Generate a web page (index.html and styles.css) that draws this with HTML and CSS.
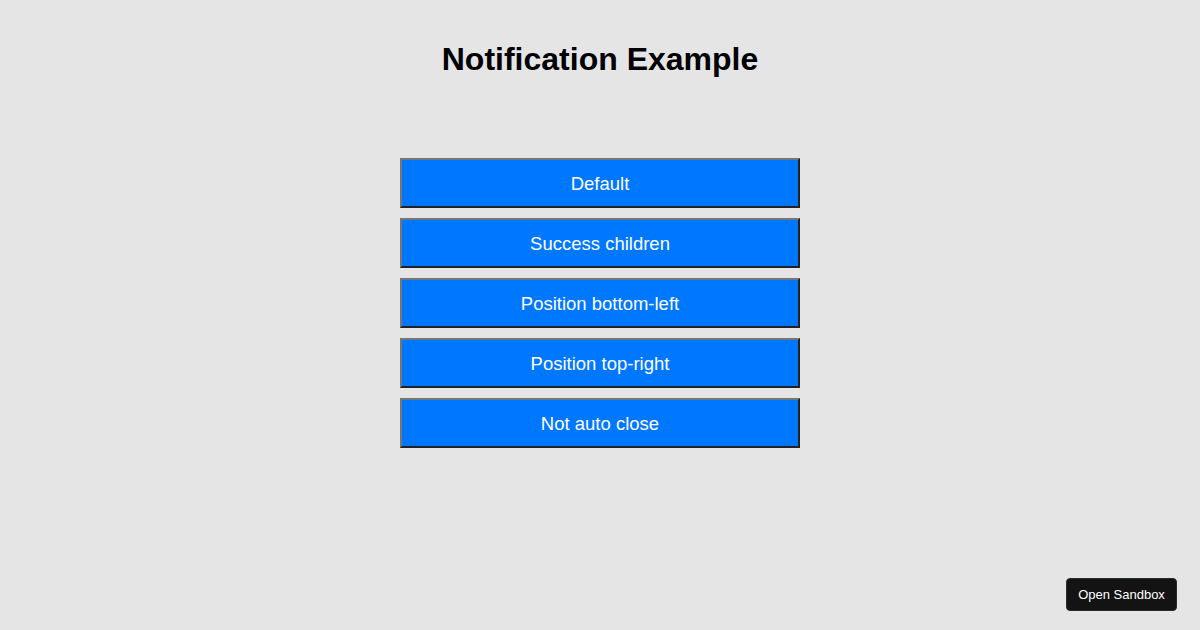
FILE: index.html
```html
<!DOCTYPE html>
<html>
<head>
<meta charset="utf-8">
<link rel="stylesheet" href="styles.css">
</head>
<body>
<main class="app">
  <h1 class="title">Notification Example</h1>
  <div class="actions">
    <button class="btn">Default</button>
    <button class="btn">Success children</button>
    <button class="btn">Position bottom-left</button>
    <button class="btn">Position top-right</button>
    <button class="btn">Not auto close</button>
  </div>
</main>
<a class="sandbox">Open Sandbox</a>
</body>
</html>
```
FILE: styles.css
```css
html, body {
  margin: 0;
  padding: 0;
  height: 100%;
}
body {
  background: #e5e5e5;
  font-family: "Liberation Sans", Arial, sans-serif;
  overflow: hidden;
}
.app {
  display: flex;
  flex-direction: column;
  align-items: center;
  padding-top: 41px;
}
.title {
  margin: 0;
  font-size: 32px;
  line-height: 37px;
  font-weight: bold;
  color: #000;
}
.actions {
  margin-top: 80px;
  display: flex;
  flex-direction: column;
  gap: 10px;
  width: 400px;
}
.btn {
  box-sizing: border-box;
  width: 400px;
  height: 50px;
  margin: 0;
  padding: 1px 0 0;
  background: #0077ff;
  color: #fff;
  font-family: "Liberation Sans", Arial, sans-serif;
  font-size: 18.5px;
  border-style: solid;
  border-width: 2px;
  border-color: #767676 #222222 #222222 #767676;
  cursor: pointer;
}
.sandbox {
  position: fixed;
  right: 23px;
  bottom: 19px;
  width: 111px;
  height: 33px;
  box-sizing: border-box;
  display: flex;
  align-items: center;
  justify-content: center;
  background: #131313;
  color: #fff;
  border: 1px solid #2a2a2a;
  border-radius: 4px;
  font-size: 13px;
  font-family: "Liberation Sans", Arial, sans-serif;
}
```
